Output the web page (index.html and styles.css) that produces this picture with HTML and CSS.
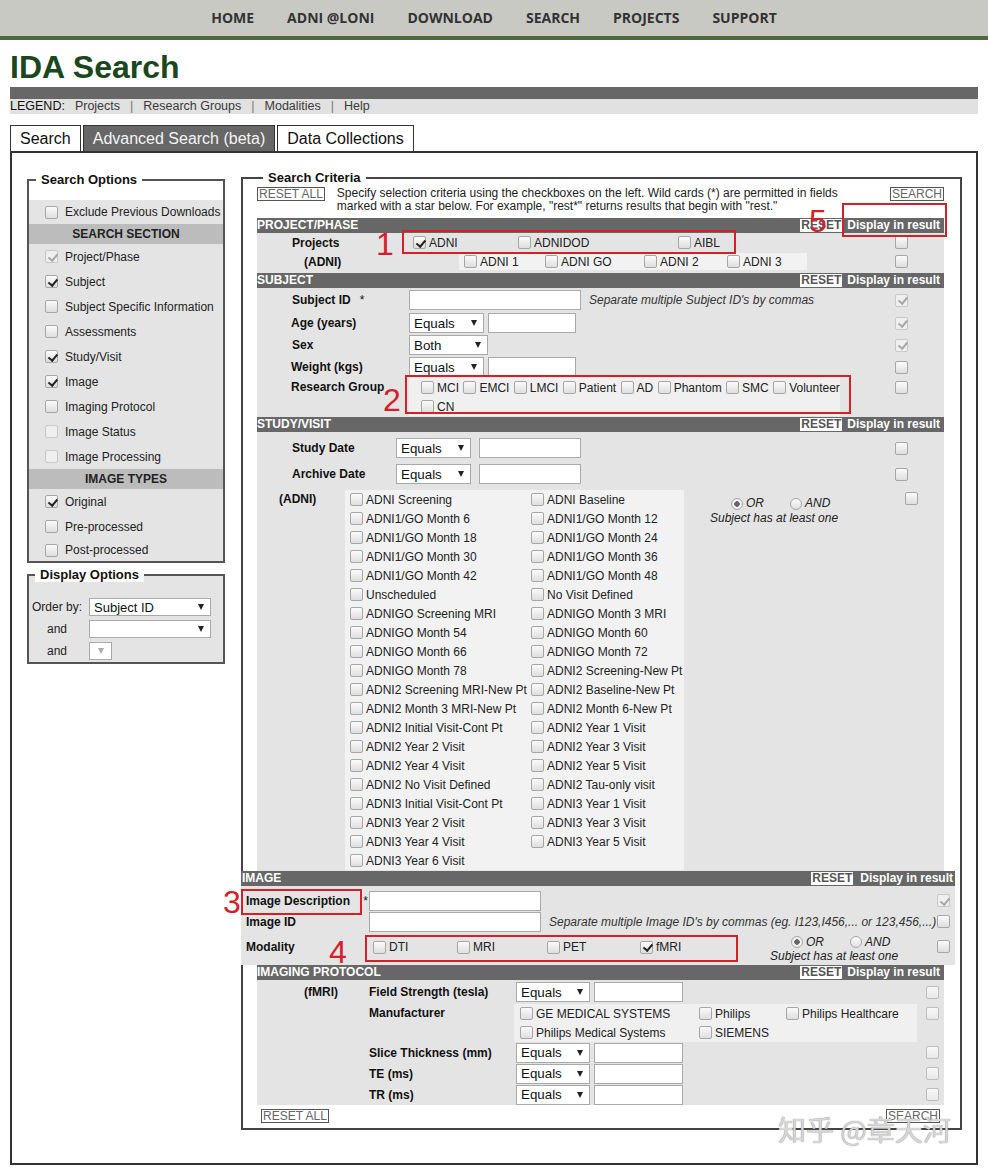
FILE: index.html
```html
<!DOCTYPE html>
<html>
<head>
<meta charset="utf-8">
<title>IDA Search</title>
<link rel="stylesheet" href="styles.css">
</head>
<body>
<nav class="topnav"><a>HOME</a><a>ADNI @LONI</a><a>DOWNLOAD</a><a>SEARCH</a><a>PROJECTS</a><a>SUPPORT</a></nav>
<div class="page">
  <h1 class="title">IDA Search</h1>
  <div class="darkbar"></div>
  <div class="legendbar"><span class="lg">LEGEND:</span><a>Projects</a><span class="sep">|</span><a>Research Groups</a><span class="sep">|</span><a>Modalities</a><span class="sep">|</span><a>Help</a></div>
  <div class="tabs"><a class="tab">Search</a><a class="tab on">Advanced Search (beta)</a><a class="tab">Data Collections</a></div>
  <div class="box">
    <div class="leftcol">
      <fieldset class="opts">
        <legend>Search Options</legend>
        <div class="optbody">
          <label class="opt first"><input type="checkbox" class="cb">Exclude Previous Downloads</label>
          <div class="oh">SEARCH SECTION</div>
          <label class="opt"><input type="checkbox" class="cb" checked disabled>Project/Phase</label>
          <label class="opt"><input type="checkbox" class="cb" checked>Subject</label>
          <label class="opt"><input type="checkbox" class="cb">Subject Specific Information</label>
          <label class="opt"><input type="checkbox" class="cb">Assessments</label>
          <label class="opt"><input type="checkbox" class="cb" checked>Study/Visit</label>
          <label class="opt"><input type="checkbox" class="cb" checked>Image</label>
          <label class="opt"><input type="checkbox" class="cb">Imaging Protocol</label>
          <label class="opt"><input type="checkbox" class="cb" disabled>Image Status</label>
          <label class="opt"><input type="checkbox" class="cb" disabled>Image Processing</label>
          <div class="oh">IMAGE TYPES</div>
          <label class="opt"><input type="checkbox" class="cb" checked>Original</label>
          <label class="opt"><input type="checkbox" class="cb">Pre-processed</label>
          <label class="opt last"><input type="checkbox" class="cb">Post-processed</label>
        </div>
      </fieldset>
      <fieldset class="disp">
        <legend>Display Options</legend>
        <div class="drow"><span class="dlab">Order by:</span><span class="sel dsel w122"><span>Subject ID</span><b class="arr"></b></span></div>
        <div class="drow"><span class="dlab">and</span><span class="sel dsel w122"><span></span><b class="arr"></b></span></div>
        <div class="drow"><span class="dlab">and</span><span class="sel dsel w23 mini"><b class="arr grey"></b></span></div>
      </fieldset>
    </div>

    <fieldset class="crit">
      <legend>Search Criteria</legend>
      <div class="intro">
        <span class="btn">RESET ALL</span>
        <div class="desc">Specify selection criteria using the checkboxes on the left. Wild cards (*) are permitted in fields<br>marked with a star below. For example, "rest*" returns results that begin with "rest."</div>
        <span class="btn">SEARCH</span>
      </div>

      <div class="sec pb1">
        <div class="sh"><span class="st">PROJECT/PHASE</span><span class="rs">RESET</span><span class="dr">Display in result</span></div>
        <div class="row h19">
          <div class="lab w152 pl35">Projects</div>
          <label class="it w105"><input type="checkbox" class="cb" checked>ADNI</label>
          <label class="it w160"><input type="checkbox" class="cb">ADNIDOD</label>
          <label class="it"><input type="checkbox" class="cb">AIBL</label>
          <div class="rc r36"><input type="checkbox" class="cb"></div>
        </div>
        <div class="row h19">
          <div class="lab w152 pl47">(ADNI)</div>
          <div class="subbox">
            <label class="it w81"><input type="checkbox" class="cb">ADNI 1</label>
            <label class="it w99"><input type="checkbox" class="cb">ADNI GO</label>
            <label class="it w83"><input type="checkbox" class="cb">ADNI 2</label>
            <label class="it"><input type="checkbox" class="cb">ADNI 3</label>
          </div>
          <div class="rc r36"><input type="checkbox" class="cb"></div>
        </div>
      </div>

      <div class="sec pt1 pb1">
        <div class="sh"><span class="st">SUBJECT</span><span class="rs">RESET</span><span class="dr">Display in result</span></div>
        <div class="row h24">
          <div class="lab w152 pl35">Subject ID<span class="ast">*</span></div>
          <input type="text" class="tx w172">
          <span class="hint ml8">Separate multiple Subject ID's by commas</span>
          <div class="rc r36"><input type="checkbox" class="cb" checked disabled></div>
        </div>
        <div class="row h22">
          <div class="lab w152 pl34">Age (years)</div>
          <span class="sel w75"><span>Equals</span><b class="arr"></b></span>
          <input type="text" class="tx w88 ml4">
          <div class="rc r36"><input type="checkbox" class="cb" checked disabled></div>
        </div>
        <div class="row h22">
          <div class="lab w152 pl35">Sex</div>
          <span class="sel w79"><span>Both</span><b class="arr"></b></span>
          <div class="rc r36"><input type="checkbox" class="cb" checked disabled></div>
        </div>
        <div class="row h22">
          <div class="lab w152 pl34">Weight (kgs)</div>
          <span class="sel w75"><span>Equals</span><b class="arr"></b></span>
          <input type="text" class="tx w88 ml4">
          <div class="rc r36"><input type="checkbox" class="cb"></div>
        </div>
        <div class="row top h38">
          <div class="lab w152 pl34 lh19">Research Group</div>
          <div class="rgbox">
            <div class="rgl">
              <label class="it2"><input type="checkbox" class="cb">MCI</label>
              <label class="it2"><input type="checkbox" class="cb">EMCI</label>
              <label class="it2"><input type="checkbox" class="cb">LMCI</label>
              <label class="it2"><input type="checkbox" class="cb">Patient</label>
              <label class="it2"><input type="checkbox" class="cb">AD</label>
              <label class="it2"><input type="checkbox" class="cb">Phantom</label>
              <label class="it2"><input type="checkbox" class="cb">SMC</label>
              <label class="it2"><input type="checkbox" class="cb">Volunteer</label>
            </div>
            <div class="rgl"><label class="it2"><input type="checkbox" class="cb">CN</label></div>
          </div>
          <div class="rc r36 mt3"><input type="checkbox" class="cb"></div>
        </div>
      </div>

      <div class="sec pb1">
        <div class="sh"><span class="st">STUDY/VISIT</span><span class="rs">RESET</span><span class="dr">Display in result</span></div>
        <div class="row h26 mt3">
          <div class="lab w139 pl35">Study Date</div>
          <span class="sel w75"><span>Equals</span><b class="arr"></b></span>
          <input type="text" class="tx w102 ml8">
          <div class="rc r36"><input type="checkbox" class="cb"></div>
        </div>
        <div class="row h26">
          <div class="lab w139 pl35">Archive Date</div>
          <span class="sel w75"><span>Equals</span><b class="arr"></b></span>
          <input type="text" class="tx w102 ml8">
          <div class="rc r36"><input type="checkbox" class="cb"></div>
        </div>
        <div class="row top mt3">
          <div class="lab w88 pl22 lh19">(ADNI)</div>
          <div class="visits">
            <label class="vi"><input type="checkbox" class="cb">ADNI Screening</label>
            <label class="vi"><input type="checkbox" class="cb">ADNI Baseline</label>
            <label class="vi"><input type="checkbox" class="cb">ADNI1/GO Month 6</label>
            <label class="vi"><input type="checkbox" class="cb">ADNI1/GO Month 12</label>
            <label class="vi"><input type="checkbox" class="cb">ADNI1/GO Month 18</label>
            <label class="vi"><input type="checkbox" class="cb">ADNI1/GO Month 24</label>
            <label class="vi"><input type="checkbox" class="cb">ADNI1/GO Month 30</label>
            <label class="vi"><input type="checkbox" class="cb">ADNI1/GO Month 36</label>
            <label class="vi"><input type="checkbox" class="cb">ADNI1/GO Month 42</label>
            <label class="vi"><input type="checkbox" class="cb">ADNI1/GO Month 48</label>
            <label class="vi"><input type="checkbox" class="cb">Unscheduled</label>
            <label class="vi"><input type="checkbox" class="cb">No Visit Defined</label>
            <label class="vi"><input type="checkbox" class="cb">ADNIGO Screening MRI</label>
            <label class="vi"><input type="checkbox" class="cb">ADNIGO Month 3 MRI</label>
            <label class="vi"><input type="checkbox" class="cb">ADNIGO Month 54</label>
            <label class="vi"><input type="checkbox" class="cb">ADNIGO Month 60</label>
            <label class="vi"><input type="checkbox" class="cb">ADNIGO Month 66</label>
            <label class="vi"><input type="checkbox" class="cb">ADNIGO Month 72</label>
            <label class="vi"><input type="checkbox" class="cb">ADNIGO Month 78</label>
            <label class="vi"><input type="checkbox" class="cb">ADNI2 Screening-New Pt</label>
            <label class="vi"><input type="checkbox" class="cb">ADNI2 Screening MRI-New Pt</label>
            <label class="vi"><input type="checkbox" class="cb">ADNI2 Baseline-New Pt</label>
            <label class="vi"><input type="checkbox" class="cb">ADNI2 Month 3 MRI-New Pt</label>
            <label class="vi"><input type="checkbox" class="cb">ADNI2 Month 6-New Pt</label>
            <label class="vi"><input type="checkbox" class="cb">ADNI2 Initial Visit-Cont Pt</label>
            <label class="vi"><input type="checkbox" class="cb">ADNI2 Year 1 Visit</label>
            <label class="vi"><input type="checkbox" class="cb">ADNI2 Year 2 Visit</label>
            <label class="vi"><input type="checkbox" class="cb">ADNI2 Year 3 Visit</label>
            <label class="vi"><input type="checkbox" class="cb">ADNI2 Year 4 Visit</label>
            <label class="vi"><input type="checkbox" class="cb">ADNI2 Year 5 Visit</label>
            <label class="vi"><input type="checkbox" class="cb">ADNI2 No Visit Defined</label>
            <label class="vi"><input type="checkbox" class="cb">ADNI2 Tau-only visit</label>
            <label class="vi"><input type="checkbox" class="cb">ADNI3 Initial Visit-Cont Pt</label>
            <label class="vi"><input type="checkbox" class="cb">ADNI3 Year 1 Visit</label>
            <label class="vi"><input type="checkbox" class="cb">ADNI3 Year 2 Visit</label>
            <label class="vi"><input type="checkbox" class="cb">ADNI3 Year 3 Visit</label>
            <label class="vi"><input type="checkbox" class="cb">ADNI3 Year 4 Visit</label>
            <label class="vi"><input type="checkbox" class="cb">ADNI3 Year 5 Visit</label>
            <label class="vi"><input type="checkbox" class="cb">ADNI3 Year 6 Visit</label>
          </div>
          <div class="orblk ml26 pt6">
            <div class="orl"><input type="radio" name="v" class="rd" checked><span>OR</span><input type="radio" name="v" class="rd gap26"><span>AND</span></div>
            <div>Subject has at least one</div>
          </div>
          <div class="rc r26 mt2"><input type="checkbox" class="cb"></div>
        </div>
      </div>

      <div class="sec img pb1">
        <div class="sh"><span class="st">IMAGE</span><span class="rs rs7">RESET</span><span class="dr dr2">Display in result</span></div>
        <div class="row h21 mt4">
          <div class="lab w128 pl5 split">Image Description<span class="ast0">*</span></div>
          <input type="text" class="tx w172">
          <div class="rc r5"><input type="checkbox" class="cb" checked disabled></div>
        </div>
        <div class="row h21">
          <div class="lab w128 pl5">Image ID</div>
          <input type="text" class="tx w172">
          <span class="hint ml8">Separate multiple Image ID's by commas (eg. I123,I456,... or 123,456,...)</span>
          <div class="rc r5"><input type="checkbox" class="cb"></div>
        </div>
        <div class="row top h32">
          <div class="lab w128 pl5 lh30">Modality</div>
          <div class="mods">
            <label class="it0 w84"><input type="checkbox" class="cb">DTI</label>
            <label class="it0 w90"><input type="checkbox" class="cb">MRI</label>
            <label class="it0 w93"><input type="checkbox" class="cb">PET</label>
            <label class="it0"><input type="checkbox" class="cb" checked>fMRI</label>
          </div>
          <div class="orblk ml33 mt3 lh14">
            <div class="orl"><input type="radio" name="m" class="rd" checked><span>OR</span><input type="radio" name="m" class="rd gap26"><span>AND</span></div>
            <div>Subject has at least one</div>
          </div>
          <div class="rc r5 mt8"><input type="checkbox" class="cb"></div>
        </div>
      </div>

      <div class="sec">
        <div class="sh"><span class="st">IMAGING PROTOCOL</span><span class="rs">RESET</span><span class="dr">Display in result</span></div>
        <div class="row h22 mt1">
          <div class="lab w112 pl47">(fMRI)</div>
          <div class="lab w147">Field Strength (tesla)</div>
          <span class="sel w74"><span>Equals</span><b class="arr"></b></span>
          <input type="text" class="tx w89 ml4">
          <div class="rc r5"><input type="checkbox" class="cb dimcb"></div>
        </div>
        <div class="row top h38 mt1">
          <div class="lab w112"></div>
          <div class="lab w147 lh19">Manufacturer</div>
          <div class="mbox">
            <label class="it0"><input type="checkbox" class="cb">GE MEDICAL SYSTEMS</label>
            <label class="it0"><input type="checkbox" class="cb">Philips</label>
            <label class="it0"><input type="checkbox" class="cb">Philips Healthcare</label>
            <label class="it0"><input type="checkbox" class="cb">Philips Medical Systems</label>
            <label class="it0"><input type="checkbox" class="cb">SIEMENS</label>
          </div>
          <div class="rc r5 mt3"><input type="checkbox" class="cb dimcb"></div>
        </div>
        <div class="row h21">
          <div class="lab w112"></div>
          <div class="lab w147">Slice Thickness (mm)</div>
          <span class="sel w74"><span>Equals</span><b class="arr"></b></span>
          <input type="text" class="tx w89 ml4">
          <div class="rc r5"><input type="checkbox" class="cb dimcb"></div>
        </div>
        <div class="row h21">
          <div class="lab w112"></div>
          <div class="lab w147">TE (ms)</div>
          <span class="sel w74"><span>Equals</span><b class="arr"></b></span>
          <input type="text" class="tx w89 ml4">
          <div class="rc r5"><input type="checkbox" class="cb dimcb"></div>
        </div>
        <div class="row h21">
          <div class="lab w112"></div>
          <div class="lab w147">TR (ms)</div>
          <span class="sel w74"><span>Equals</span><b class="arr"></b></span>
          <input type="text" class="tx w89 ml4">
          <div class="rc r5"><input type="checkbox" class="cb dimcb"></div>
        </div>
      </div>

      <div class="foot"><span class="btn">RESET ALL</span><span class="btn">SEARCH</span></div>
    </fieldset>
  </div>

  <div class="ann b1"></div>
  <div class="ann b2"></div>
  <div class="ann b3"></div>
  <div class="ann b4"></div>
  <div class="ann b5"></div>
  <div class="num n1">1</div>
  <div class="num n2">2</div>
  <div class="num n3">3</div>
  <div class="num n4">4</div>
  <div class="num n5">5</div>
  <div class="wm">知乎 @章天河</div>
</div>
</body>
</html>
```

FILE: styles.css
```css
* { box-sizing: border-box; }
html, body { margin: 0; }
body {
  font-family: "Liberation Sans", Arial, sans-serif;
  font-size: 12px;
  color: #222;
  background: #fff;
}
a { color: inherit; text-decoration: none; }

/* top navigation */
.topnav {
  height: 40px;
  background: #c9c9c4;
  border-bottom: 4px solid #4e6a3c;
  display: flex;
  justify-content: center;
  align-items: center;
  gap: 33px;
  padding-bottom: 1px;
  font-family: "Open Sans", "Liberation Sans", sans-serif;
  font-weight: 700;
  font-size: 14px;
  color: #333;
}

.page { position: relative; margin: 0 10px; padding-top: 8px; }

.title {
  margin: 0;
  height: 38px;
  font: bold 32px/38px "Liberation Sans", Arial, sans-serif;
  color: #1a471b;
}
.darkbar { margin-top: 1px; height: 12px; background: #676767; }
.legendbar {
  height: 15px;
  line-height: 15px;
  background: #e1e1e1;
  font-size: 12.5px;
  color: #3a3a3a;
  display: flex;
}
.legendbar .lg { color: #111; margin-right: 10px; }
.legendbar .sep { margin: 0 10px; color: #777; }

/* tabs */
.tabs { display: flex; gap: 2px; margin-top: 11px; }
.tab {
  height: 26px;
  border: 1px solid #333;
  border-bottom: 0;
  padding: 0 9px;
  font-size: 16px;
  line-height: 25px;
  background: #fff;
  color: #111;
}
.tab.on { background: #676767; color: #f4f4f4; }

/* main box */
.box {
  border: 2px solid #333;
  height: 1014px;
  display: flex;
  align-items: flex-start;
  padding: 17px 0 0 15px;
}
.leftcol { width: 198px; flex: none; margin-top: 2px; margin-right: 16px; }

fieldset { margin: 0; padding: 0; border: 2px solid #555; min-width: 0; }
legend {
  padding: 0 5px;
  margin-left: 7px;
  font-weight: bold;
  font-size: 13px;
  line-height: 15px;
  background: #fff;
  color: #111;
}

/* search options */
.opts { background: #fff; }
.optbody { margin-top: 13px; background: #e4e4e4; }
.opt { display: flex; align-items: center; height: 25px; padding-left: 16px; color: #222; }
.opt .cb { margin: 0 7px 0 0; }
.opt.first { height: 24px; }
.opt.last { height: 22px; }
.oh {
  height: 20px;
  line-height: 20px;
  background: #bcbcbc;
  text-align: center;
  font-weight: bold;
  color: #222;
}

/* display options */
.disp { margin-top: 4px; background: #e4e4e4; padding: 14px 0 0; }
.disp legend { margin-left: 6px; }
.drow { display: flex; align-items: center; height: 22px; }
.dlab { width: 56px; margin-right: 4px; text-align: center; }

/* select look */
.sel {
  display: inline-flex;
  align-items: center;
  justify-content: space-between;
  height: 20px;
  border: 1px solid #a9a9a9;
  background: #fff;
  font-size: 13.33px;
  padding: 0 6px 0 4px;
  flex: none;
  color: #111;
}
.dsel { height: 18px; font-size: 13px; }
.mini { justify-content: center; padding: 0; }
.arr {
  width: 0; height: 0;
  border-left: 3.5px solid transparent;
  border-right: 3.5px solid transparent;
  border-top: 6px solid #222;
}
.arr.grey { border-top-color: #aaa; }

/* criteria */
.crit { width: 721px; flex: none; padding: 0 16px 5px 14px; border-color: #444; }
.crit legend { margin-left: 6px; }
.intro { display: flex; align-items: flex-start; margin-top: 2px; margin-bottom: 5px; }
.btn {
  height: 14px;
  line-height: 12px;
  border: 1px solid #555;
  padding: 0 1px;
  color: #666;
  background: #fff;
  font-size: 12px;
  flex: none;
}
.desc { margin-left: 12px; line-height: 13px; flex: 1; color: #222; }

.sec { background: #e4e4e4; }
.sh {
  display: flex;
  align-items: center;
  height: 15px;
  background: #676767;
  color: #fff;
  font-weight: bold;
  line-height: 15px;
}
.sh .st { flex: 1; }
.sh .rs {
  background: #fff;
  color: #555;
  height: 13px;
  line-height: 13px;
  padding: 0 1px;
  margin-right: 5px;
}
.sh .dr { padding-right: 4px; }
.sh .rs7 { margin-right: 7px; }
.sh .dr2 { padding-right: 2px; }

.row { display: flex; align-items: center; }
.row.top { align-items: flex-start; }
.lab { flex: none; font-weight: bold; color: #111; }
.split { display: flex; justify-content: space-between; padding-right: 1px; }
.ast { font-weight: normal; margin-left: 9px; }
.ast0 { font-weight: normal; }
.rc { margin-left: auto; display: flex; }
.rc .cb { margin: 0; }

/* form controls */
.cb {
  -webkit-appearance: none;
  appearance: none;
  margin: 0 3px 0 4px;
  width: 13px;
  height: 13px;
  border: 1px solid #a6a6a6;
  border-radius: 2px;
  background: linear-gradient(#fbfbfb, #dedede);
  position: relative;
  flex: none;
}
.cb:checked::after {
  content: "";
  position: absolute;
  left: 3.5px;
  top: 0.5px;
  width: 3.5px;
  height: 7px;
  border: solid #222;
  border-width: 0 2px 2px 0;
  transform: rotate(40deg);
}
.cb:disabled { border-color: #c8c8c8; background: #efefef; }
.cb:disabled:checked::after { border-color: #a8a8a8; }
.cb.dimcb { border-color: #bdbdbd; background: linear-gradient(#f8f8f8, #e8e8e8); }

.rd {
  -webkit-appearance: none;
  appearance: none;
  margin: 0 3px 0 0;
  width: 12px;
  height: 12px;
  border: 1px solid #a6a6a6;
  border-radius: 50%;
  background: linear-gradient(#fafafa, #e2e2e2);
  flex: none;
}
.rd:checked { background: radial-gradient(circle, #666 0 2.5px, #f0f0f0 3px); }
.rd.gap26 { margin-left: 26px; }

.tx {
  height: 20px;
  border: 1px solid #a9a9a9;
  background: #fff;
  padding: 0;
  margin: 0;
  flex: none;
  font: inherit;
}
.hint { font-style: italic; color: #333; white-space: nowrap; }

.it { display: flex; align-items: center; flex: none; white-space: nowrap; color: #222; }
.it0 { display: flex; align-items: center; white-space: nowrap; color: #222; }
.it0 .cb { margin: 0 3px 0 0; }
.subbox {
  display: flex;
  align-items: center;
  margin-left: 50px;
  width: 348px;
  height: 17px;
  padding-left: 1px;
  background: #f2f2f2;
  flex: none;
}
.rgbox { width: 431px; flex: none; background: #f0f0f0; padding-left: 11px; }
.rgl { display: flex; align-items: center; height: 19px; }
.it2 { display: flex; align-items: center; white-space: nowrap; margin-right: 3.4px; color: #222; }
.it2 .cb { margin: 0 3px 0 1px; }

.visits {
  display: grid;
  grid-template-columns: 181px 157px;
  width: 339px;
  flex: none;
  background: #f2f2f2;
  padding-left: 1px;
}
.vi { display: flex; align-items: center; height: 19px; white-space: nowrap; color: #222; }

.orblk { font-style: italic; line-height: 15px; color: #222; white-space: nowrap; flex: none; }
.orblk.lh14 { line-height: 14px; }
.orl { display: flex; align-items: center; padding-left: 21px; }

.img { margin: 0 -11px 0 -16px; }
.img .sh .st { padding-left: 1px; }
.mods { display: flex; align-items: center; height: 30px; width: 368px; padding-left: 4px; flex: none; }

.mbox {
  display: grid;
  grid-template-columns: 179px 87px auto;
  grid-auto-rows: 19px;
  align-items: center;
  width: 403px;
  margin-left: -2px;
  padding-left: 6px;
  background: #f0f0f0;
  flex: none;
}

.foot { display: flex; justify-content: space-between; margin-top: 4px; padding: 0 4px; }

/* red annotation marks drawn over the screenshot */
.ann { position: absolute; border: 2px solid #d42029; }
.b1 { left: 392px; top: 190px; width: 334px; height: 24px; }
.b2 { left: 395px; top: 335px; width: 446px; height: 39px; }
.b3 { left: 231px; top: 849px; width: 121px; height: 26px; }
.b4 { left: 355px; top: 895px; width: 373px; height: 27px; }
.b5 { left: 832px; top: 163px; width: 105px; height: 34px; }
.num {
  position: absolute;
  color: #d42029;
  font: 32px/32px "Liberation Sans", Arial, sans-serif;
}
.n1 { left: 366px; top: 188px; }
.n2 { left: 373px; top: 344px; }
.n3 { left: 213px; top: 846px; }
.n4 { left: 319px; top: 896px; }
.n5 { left: 799px; top: 165px; }

.wm {
  position: absolute;
  left: 768px;
  top: 1073px;
  font-family: "Noto Sans CJK SC", sans-serif;
  font-size: 28px;
  line-height: 32px;
  color: #d6d6d6;
  text-shadow: 0 0 1px #777;
  white-space: nowrap;
}

/* sizing / spacing utilities (kept last so they win) */
.h19 { height: 19px; }
.h21 { height: 21px; }
.h22 { height: 22px; }
.h24 { height: 24px; }
.h26 { height: 26px; }
.h32 { height: 32px; }
.h38 { height: 38px; }
.lh19 { line-height: 19px; }
.lh30 { line-height: 30px; }
.w23 { width: 23px; }
.w74 { width: 74px; }
.w75 { width: 75px; }
.w79 { width: 79px; }
.w81 { width: 81px; }
.w83 { width: 83px; }
.w84 { width: 84px; }
.w88 { width: 88px; }
.w89 { width: 89px; }
.w90 { width: 90px; }
.w93 { width: 93px; }
.w99 { width: 99px; }
.w102 { width: 102px; }
.w105 { width: 105px; }
.w112 { width: 112px; }
.w122 { width: 122px; }
.w128 { width: 128px; }
.w139 { width: 139px; }
.w147 { width: 147px; }
.w152 { width: 152px; }
.w160 { width: 160px; }
.w172 { width: 172px; }
.pl5 { padding-left: 5px; }
.pl22 { padding-left: 22px; }
.pl34 { padding-left: 34px; }
.pl35 { padding-left: 35px; }
.pl47 { padding-left: 47px; }
.pt1 { padding-top: 1px; }
.pb1 { padding-bottom: 1px; }
.pt6 { padding-top: 6px; }
.ml4 { margin-left: 4px; }
.ml8 { margin-left: 8px; }
.ml10 { margin-left: 10px; }
.ml26 { margin-left: 26px; }
.ml33 { margin-left: 33px; }
.mt1 { margin-top: 1px; }
.mt2 { margin-top: 2px; }
.mt3 { margin-top: 3px; }
.mt4 { margin-top: 4px; }
.mt8 { margin-top: 8px; }
.r36 { margin-right: 36px; }
.r26 { margin-right: 26px; }
.r5 { margin-right: 5px; }
```
